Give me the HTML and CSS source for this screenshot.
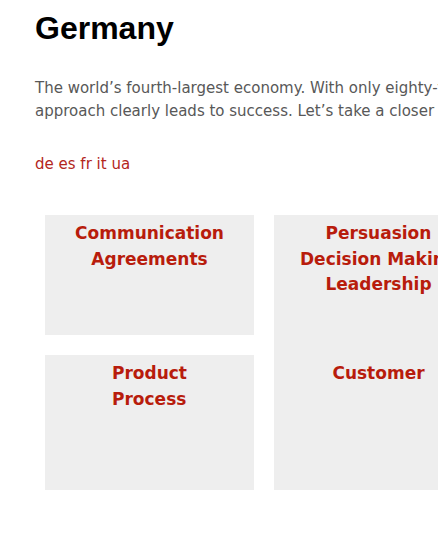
FILE: index.html
```html
<!DOCTYPE html>
<html>
<head>
<meta charset="utf-8">
<link rel="stylesheet" href="styles.css">
</head>
<body>
<main class="page">
  <h1 class="title">Germany</h1>
  <p class="intro">The world’s fourth-largest economy. With only eighty-two million inhabitants, Germany’s<br>approach clearly leads to success. Let’s take a closer look at its business culture.</p>
  <nav class="langs"><a href="#">de</a> <a href="#">es</a> <a href="#">fr</a> <a href="#">it</a> <a href="#">ua</a></nav>
  <section class="grid">
    <div class="col">
      <div class="card card-a"><h2 class="card-title">Communication<br>Agreements</h2></div>
      <div class="card card-b"><h2 class="card-title left"><span>Product<br>Process</span></h2></div>
    </div>
    <div class="col col-joined">
      <div class="card card-c"><h2 class="card-title">Persuasion<br>Decision Making<br>Leadership</h2></div>
      <div class="card card-b"><h2 class="card-title">Customer</h2></div>
    </div>
  </section>
</main>
</body>
</html>
```

FILE: styles.css
```css
html, body {
  margin: 0;
  padding: 0;
  background: #fff;
  overflow: hidden;
}
.page {
  padding: 0 0 0 35px;
  width: 800px;
}
.title {
  font-family: "Liberation Sans", Arial, sans-serif;
  font-weight: bold;
  font-size: 32px;
  line-height: 40px;
  margin: 8px 0 0;
  color: #000;
}
.intro {
  font-family: "DejaVu Sans", Verdana, sans-serif;
  font-size: 15px;
  line-height: 23px;
  color: #585858;
  margin: 29px 0 0;
  white-space: nowrap;
}
.langs {
  font-family: "DejaVu Sans", Verdana, sans-serif;
  font-size: 15px;
  line-height: 20px;
  margin-top: 31px;
}
.langs a {
  color: #b3261c;
  text-decoration: none;
}
.grid {
  display: flex;
  gap: 20px;
  margin: 41px 0 0 10px;
}
.col {
  display: flex;
  flex-direction: column;
  gap: 20px;
  width: 209px;
}
.col-joined {
  gap: 0;
}
.card {
  background: #eeeeee;
  box-sizing: border-box;
  padding-top: 6px;
}
.card-a { height: 120px; }
.card-b { height: 135px; padding-top: 6px; }
.card-c { height: 140px; }
.card-title {
  font-family: "DejaVu Sans", Verdana, sans-serif;
  font-weight: bold;
  font-size: 17px;
  line-height: 25.5px;
  color: #b81c0c;
  text-align: center;
  margin: 0;
  white-space: nowrap;
}
.card-title.left span {
  display: inline-block;
  text-align: left;
}
```
